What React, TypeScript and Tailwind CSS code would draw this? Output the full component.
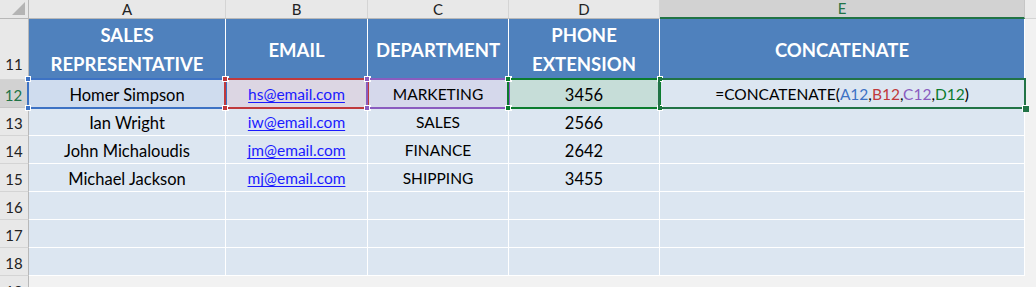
import React from "react";

type Col = { key: string; w: string };

const cols: Col[] = [
  { key: "A", w: "w-[197px]" },
  { key: "B", w: "w-[142px]" },
  { key: "C", w: "w-[141px]" },
  { key: "D", w: "w-[151px]" },
  { key: "E", w: "w-[365px]" },
];

const people = [
  { name: "Ian Wright", email: "iw@email.com", dept: "SALES", ext: "2566" },
  { name: "John Michaloudis", email: "jm@email.com", dept: "FINANCE", ext: "2642" },
  { name: "Michael Jackson", email: "mj@email.com", dept: "SHIPPING", ext: "3455" },
];

const font = "font-['Lato',sans-serif]";

function RowNum({ n, active, tall }: { n: number; active?: boolean; tall?: boolean }) {
  return (
    <div
      className={`w-[29px] shrink-0 flex justify-center text-[15px] border-b ${
        tall ? "items-end pb-[4px]" : "items-center pt-[3px]"
      } ${
        active
          ? "bg-[#d2d2d2] text-[#217346] border-r-2 border-r-[#217346] border-b-[#c6c6c6]"
          : "bg-[#e8e8e8] text-[#222] border-r border-r-[#b8b8b8] border-b-[#d4d4d4]"
      }`}
    >
      {n}
    </div>
  );
}

function Cell({ w, children, bg = "bg-[#dce6f1]" }: { w: string; children?: React.ReactNode; bg?: string }) {
  return (
    <div
      className={`${w} shrink-0 ${bg} border-r border-b border-white flex items-center justify-center pt-[3px] text-[16.5px] text-black`}
    >
      {children}
    </div>
  );
}

function Email({ children }: { children: React.ReactNode }) {
  return <span className="text-[#1a1aff] underline underline-offset-[2px] text-[15.5px]">{children}</span>;
}

// range-reference highlight around a cell, with the four corner handles
function Range({ line, fill }: { line: string; fill: string }) {
  const handle = `absolute w-1.5 h-1.5 border border-white ${fill}`;
  return (
    <div className="absolute -top-0.5 -left-0.5 -right-px -bottom-px pointer-events-none z-10">
      <div className={`absolute inset-0 border-2 ${line}`} />
      <div className={`${handle} -top-0.5 -left-0.5`} />
      <div className={`${handle} -top-0.5 -right-0.5`} />
      <div className={`${handle} -bottom-0.5 -left-0.5`} />
      <div className={`${handle} -bottom-0.5 -right-0.5`} />
    </div>
  );
}

export default function App() {
  return (
    <div className={`w-[1036px] h-[287px] overflow-hidden bg-[#f2f2f2] ${font}`}>
      {/* column letters */}
      <div className="flex h-[19px] text-[15px]">
        <div className="w-[29px] shrink-0 bg-[#e8e8e8] border-r border-b border-[#b8b8b8] relative">
          <svg className="absolute left-[12px] top-[2px]" width="14" height="13" viewBox="0 0 14 13">
            <polygon points="13,0 13,13 0,13" fill="#b4b4b4" />
          </svg>
        </div>
        {cols.map((c) =>
          c.key === "E" ? (
            <div
              key={c.key}
              className={`${c.w} shrink-0 bg-[#d2d2d2] border-r border-r-[#c6c6c6] border-b-2 border-b-[#217346] flex items-center justify-center text-[#217346]`}
            >
              {c.key}
            </div>
          ) : (
            <div
              key={c.key}
              className={`${c.w} shrink-0 bg-[#e8e8e8] border-r border-r-[#d4d4d4] border-b border-b-[#b8b8b8] flex items-center justify-center text-[#222]`}
            >
              {c.key}
            </div>
          )
        )}
        <div className="flex-1 bg-[#ececec] border-b border-[#d4d4d4]" />
      </div>

      {/* header row 11 */}
      <div className="flex h-[61px]">
        <RowNum n={11} tall />
        {[
          ["SALES", "REPRESENTATIVE"],
          ["EMAIL"],
          ["DEPARTMENT"],
          ["PHONE", "EXTENSION"],
          ["CONCATENATE"],
        ].map((lines, i) => (
          <div
            key={i}
            className={`${cols[i].w} shrink-0 bg-[#4f81bd] border-r border-b border-white flex flex-col items-center justify-center pt-[2px] text-white font-bold text-[18.5px] leading-[29px]`}
          >
            {lines.map((l) => (
              <span key={l}>{l}</span>
            ))}
          </div>
        ))}
      </div>

      {/* row 12 with range highlights */}
      <div className="flex h-[28px]">
        <RowNum n={12} active />
        <div className="relative flex">
          <Cell w="w-[197px]" bg="bg-[#cfdcee]">Homer Simpson</Cell>
          <Range line="border-[#3d72c4]" fill="bg-[#3d72c4]" />
        </div>
        <div className="relative flex">
          <Cell w="w-[142px]" bg="bg-[#dcd6e3]">
            <Email>hs@email.com</Email>
          </Cell>
          <Range line="border-[#c0393c]" fill="bg-[#c0393c]" />
        </div>
        <div className="relative flex">
          <Cell w="w-[141px]" bg="bg-[#d5d8eb]">
            <span className="text-[15.5px]">MARKETING</span>
          </Cell>
          <Range line="border-[#8a5cbf]" fill="bg-[#8a5cbf]" />
        </div>
        <div className="relative flex">
          <Cell w="w-[151px]" bg="bg-[#c6ddd8]">3456</Cell>
          <Range line="border-[#0b7c2e]" fill="bg-[#0b7c2e]" />
        </div>
        <div className="relative flex">
          <Cell w="w-[365px]">
            <span className="text-[15.5px]">
              =CONCATENATE(<span className="text-[#3d72c4]">A12</span>,<span className="text-[#c0393c]">B12</span>,
              <span className="text-[#8a5cbf]">C12</span>,<span className="text-[#0b7c2e]">D12</span>)
            </span>
          </Cell>
          <div className="absolute -top-0.5 -left-0.5 -right-px -bottom-px pointer-events-none z-20">
            <div className="absolute inset-0 border-2 border-[#217346]" />
            <div className="absolute -bottom-[3px] -right-[3px] w-[7px] h-[7px] bg-[#217346] border-l border-t border-white" />
          </div>
        </div>
      </div>

      {people.map((p, i) => (
        <div key={p.name} className="flex h-[28px]">
          <RowNum n={13 + i} />
          <Cell w={cols[0].w}>{p.name}</Cell>
          <Cell w={cols[1].w}>
            <Email>{p.email}</Email>
          </Cell>
          <Cell w={cols[2].w}>
            <span className="text-[15.5px]">{p.dept}</span>
          </Cell>
          <Cell w={cols[3].w}>{p.ext}</Cell>
          <Cell w={cols[4].w} />
        </div>
      ))}

      {[16, 17, 18].map((n) => (
        <div key={n} className="flex h-[28px]">
          <RowNum n={n} />
          {cols.map((c) => (
            <Cell key={c.key} w={c.w} />
          ))}
        </div>
      ))}

      <div className="flex h-[28px]">
        <RowNum n={19} />
      </div>
    </div>
  );
}
